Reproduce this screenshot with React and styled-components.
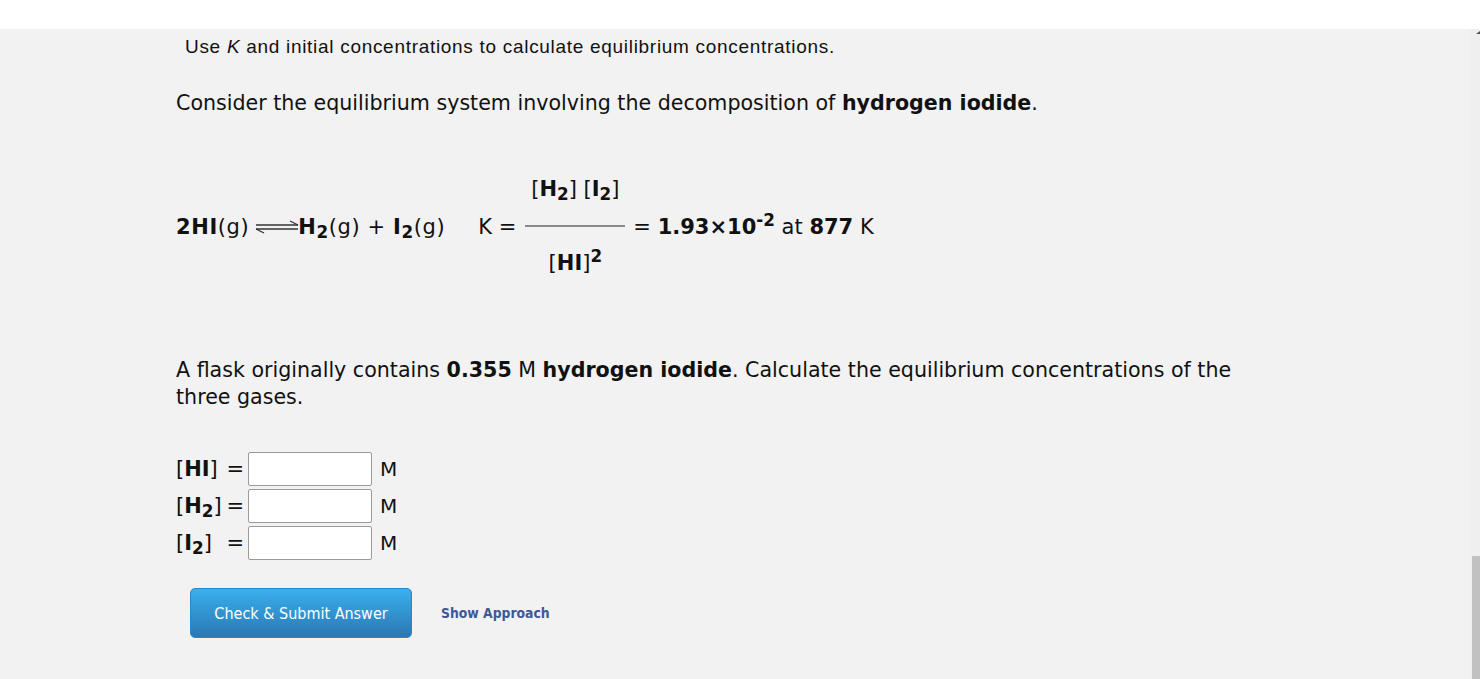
import React from 'react';
import styled, { createGlobalStyle } from 'styled-components';

const GlobalStyle = createGlobalStyle`
  html, body {
    margin: 0;
    padding: 0;
    background: #f2f2f2;
  }
  body {
    font-family: "DejaVu Sans", Verdana, sans-serif;
    color: #1a1a1a;
    overflow: hidden;
  }
`;

const TopBar = styled.div`
  height: 29px;
  background: #ffffff;
`;

const Page = styled.div`
  position: relative;
  height: 650px;
  background: #f2f2f2;
`;

const Content = styled.div`
  padding: 6px 0 0 176px;
  display: flex;
  flex-direction: column;
`;

const Intro = styled.div`
  font-family: "Liberation Sans", Arial, sans-serif;
  font-size: 19px;
  letter-spacing: 0.7px;
  line-height: 24px;
  padding-left: 9px;
  color: #111;
`;

const Para = styled.p`
  margin: 0;
  font-size: 20.6px;
  line-height: 27px;
  color: #111;
  margin-top: ${({ $top }) => $top || 0}px;
  max-width: 1090px;
`;

const EquationRow = styled.div`
  display: flex;
  align-items: center;
  margin-top: 59px;
  font-size: 21px;
  color: #111;
`;

const Species = styled.span`
  white-space: nowrap;
  letter-spacing: 0.6px;
`;

const ArrowBox = styled.span`
  display: inline-flex;
  width: 46px;
  height: 14px;
  margin: 0 -2px 0 5px;
`;

const KLabel = styled.span`
  margin-left: 33px;
  margin-right: 9px;
`;

const Fraction = styled.span`
  display: inline-flex;
  flex-direction: column;
  align-items: center;
  width: 100px;
`;

const FracTop = styled.span`
  line-height: 27px;
  padding-bottom: 22px;
  white-space: nowrap;
`;

const FracLine = styled.span`
  display: block;
  width: 100%;
  height: 2px;
  background: #8a8a8a;
`;

const FracBottom = styled.span`
  line-height: 27px;
  padding-top: 23px;
  white-space: nowrap;
`;

const Value = styled.span`
  margin-left: 8px;
`;

const Answers = styled.div`
  margin-top: 41px;
  display: grid;
  grid-template-columns: 72px 124px auto;
  row-gap: 3px;
  align-items: center;
`;

const Label = styled.span`
  font-size: 21px;
  color: #111;
  display: flex;
  justify-content: space-between;
  padding-right: 4px;
`;

const Input = styled.input`
  box-sizing: border-box;
  width: 124px;
  height: 34px;
  border: 1px solid #9a9a9a;
  border-radius: 2px;
  background: #fff;
  font-size: 16px;
`;

const Unit = styled.span`
  font-size: 20px;
  margin-left: 8px;
  color: #111;
`;

const Actions = styled.div`
  display: flex;
  align-items: center;
  margin-top: 28px;
  margin-left: 14px;
  gap: 29px;
`;

const SubmitButton = styled.button`
  width: 222px;
  height: 50px;
  border: 1px solid #2b86c8;
  border-radius: 5px;
  background: linear-gradient(#39b0ec, #2b77b3);
  color: #fff;
  font-family: "DejaVu Sans Condensed", "DejaVu Sans", sans-serif;
  font-size: 16px;
  cursor: pointer;
`;

const LinkButton = styled.button`
  border: none;
  background: none;
  padding: 0;
  color: #3b5998;
  font-family: "DejaVu Sans Condensed", "DejaVu Sans", sans-serif;
  font-weight: bold;
  font-size: 13.8px;
  cursor: pointer;
`;

const ScrollTrack = styled.div`
  position: absolute;
  top: 0;
  right: 0;
  width: 10px;
  height: 100%;
  background: #efefef;
`;

const ScrollThumb = styled.div`
  position: absolute;
  right: 0;
  bottom: 0;
  width: 8px;
  height: 123px;
  background: #c1c1c1;
`;

const ScrollArrow = styled.div`
  position: absolute;
  top: 2px;
  right: 0;
  width: 0;
  height: 0;
  border-left: 4px solid transparent;
  border-bottom: 3px solid #505050;
`;

const Sub = styled.sub`
  font-size: 0.8em;
  vertical-align: -0.25em;
  line-height: 0;
`;

const Sup = styled.sup`
  font-size: 0.8em;
  vertical-align: 0.45em;
  line-height: 0;
`;

const B = styled.b``;

function EqArrow() {
  return (
    <ArrowBox>
      <svg width="46" height="14" viewBox="0 0 46 14">
        <line x1="2" y1="5" x2="44" y2="5" stroke="#333" strokeWidth="1.3" />
        <line x1="36" y1="1" x2="44" y2="5" stroke="#333" strokeWidth="1.3" />
        <line x1="2" y1="9" x2="44" y2="9" stroke="#333" strokeWidth="1.3" />
        <line x1="2" y1="9" x2="10" y2="13" stroke="#333" strokeWidth="1.3" />
      </svg>
    </ArrowBox>
  );
}

export default function App() {
  return (
    <>
      <GlobalStyle />
      <TopBar />
      <Page>
        <Content>
          <Intro>
            Use <i>K</i> and initial concentrations to calculate equilibrium concentrations.
          </Intro>
          <Para $top={31}>
            Consider the equilibrium system involving the decomposition of <B>hydrogen iodide</B>.
          </Para>

          <EquationRow>
            <Species><B>2HI</B>(g)</Species>
            <EqArrow />
            <Species>
              <B>H<Sub>2</Sub></B>(g) + <B>I<Sub>2</Sub></B>(g)
            </Species>
            <KLabel>K =</KLabel>
            <Fraction>
              <FracTop>
                [<B>H<Sub>2</Sub></B>] [<B>I<Sub>2</Sub></B>]
              </FracTop>
              <FracLine />
              <FracBottom>
                [<B>HI</B>]<Sup><B>2</B></Sup>
              </FracBottom>
            </Fraction>
            <Value>
              = <B>1.93×10<Sup>-2</Sup></B> at <B>877</B> K
            </Value>
          </EquationRow>

          <Para $top={80}>
            A flask originally contains <B>0.355</B> M <B>hydrogen iodide</B>. Calculate the
            equilibrium concentrations of the three gases.
          </Para>

          <Answers>
            <Label><span>[<B>HI</B>]</span><span>=</span></Label>
            <Input />
            <Unit>M</Unit>
            <Label><span>[<B>H<Sub>2</Sub></B>]</span><span>=</span></Label>
            <Input />
            <Unit>M</Unit>
            <Label><span>[<B>I<Sub>2</Sub></B>]</span><span>=</span></Label>
            <Input />
            <Unit>M</Unit>
          </Answers>

          <Actions>
            <SubmitButton>Check &amp; Submit Answer</SubmitButton>
            <LinkButton>Show Approach</LinkButton>
          </Actions>
        </Content>
        <ScrollTrack>
          <ScrollArrow />
          <ScrollThumb />
        </ScrollTrack>
      </Page>
    </>
  );
}
